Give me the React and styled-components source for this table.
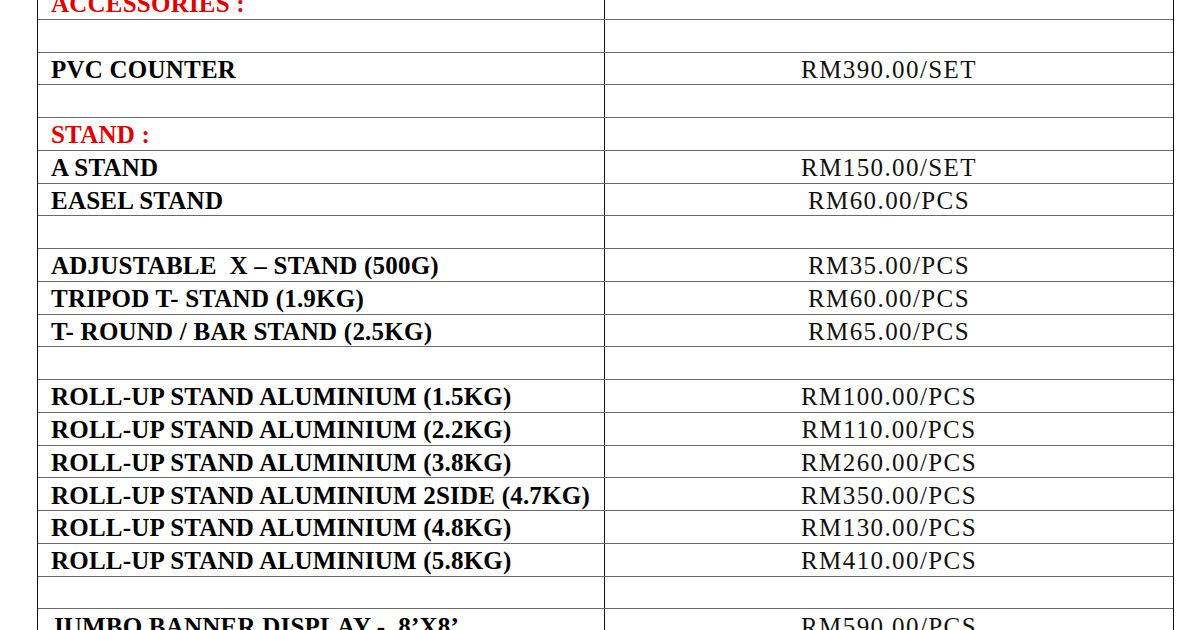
import React from 'react';
import styled, { createGlobalStyle } from 'styled-components';

const GlobalStyle = createGlobalStyle`
  html, body {
    margin: 0;
    padding: 0;
    background: #ffffff;
  }
`;

const rows = [
  { name: 'ACCESSORIES :', heading: true },
  {},
  { name: 'PVC COUNTER', price: 'RM390.00/SET' },
  {},
  { name: 'STAND :', heading: true },
  { name: 'A STAND', price: 'RM150.00/SET' },
  { name: 'EASEL STAND', price: 'RM60.00/PCS' },
  {},
  { name: 'ADJUSTABLE \u00a0X \u2013 STAND (500G)', price: 'RM35.00/PCS' },
  { name: 'TRIPOD T- STAND (1.9KG)', price: 'RM60.00/PCS' },
  { name: 'T- ROUND / BAR STAND (2.5KG)', price: 'RM65.00/PCS' },
  {},
  { name: 'ROLL-UP STAND ALUMINIUM (1.5KG)', price: 'RM100.00/PCS' },
  { name: 'ROLL-UP STAND ALUMINIUM (2.2KG)', price: 'RM110.00/PCS' },
  { name: 'ROLL-UP STAND ALUMINIUM (3.8KG)', price: 'RM260.00/PCS' },
  { name: 'ROLL-UP STAND ALUMINIUM 2SIDE (4.7KG)', price: 'RM350.00/PCS' },
  { name: 'ROLL-UP STAND ALUMINIUM (4.8KG)', price: 'RM130.00/PCS' },
  { name: 'ROLL-UP STAND ALUMINIUM (5.8KG)', price: 'RM410.00/PCS' },
  {},
  { name: 'JUMBO BANNER DISPLAY - \u00a08\u2019X8\u2019', price: 'RM590.00/PCS' },
];

function App() {
  return (
    <Page>
      <GlobalStyle />
      <Sheet>
        {rows.map((row, i) => (
          <Row key={i}>
            <NameCell $heading={row.heading}>{row.name}</NameCell>
            <PriceCell>{row.price}</PriceCell>
          </Row>
        ))}
      </Sheet>
    </Page>
  );
}

export default App;

const Page = styled.div`
  width: 1200px;
  height: 630px;
  overflow: hidden;
  background: #fff;
`;

const Sheet = styled.div`
  margin: -13px 0 0 37px;
  width: 1135px;
  border-left: 1.5px solid #111;
  border-right: 1.5px solid #111;
  display: flex;
  flex-direction: column;
`;

const Row = styled.div`
  display: grid;
  grid-template-columns: 567px 1fr;
  height: 32.75px;
  box-sizing: border-box;
  border-bottom: 1.5px solid #6a6a6a;
`;

const NameCell = styled.div`
  border-right: 1.5px solid #111;
  padding: 3px 0 0 13px;
  display: flex;
  align-items: center;
  font-family: 'Liberation Serif', 'DejaVu Serif', serif;
  font-weight: bold;
  font-size: 25px;
  letter-spacing: 0.22px;
  color: ${(p) => (p.$heading ? '#e00000' : '#000')};
  white-space: pre;
  overflow: hidden;
`;

const PriceCell = styled.div`
  display: flex;
  align-items: center;
  justify-content: center;
  padding-top: 3px;
  font-family: 'Liberation Serif', 'DejaVu Serif', serif;
  font-size: 25px;
  letter-spacing: 1.4px;
  color: #111;
`;
